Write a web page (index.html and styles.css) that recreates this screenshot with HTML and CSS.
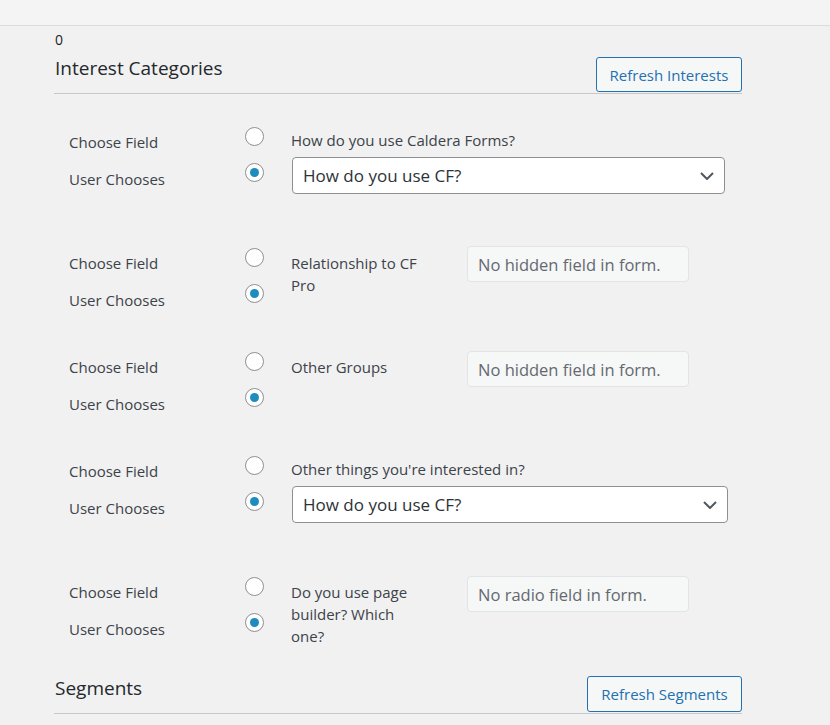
FILE: index.html
```html
<!DOCTYPE html>
<html>
<head>
<meta charset="utf-8">
<link rel="stylesheet" href="styles.css">
</head>
<body>
<div class="topbar"></div>
<main class="content">
  <div class="count">0</div>
  <div class="section-head">
    <h2 class="section-title">Interest Categories</h2>
    <button class="btn btn-interests" type="button">Refresh Interests</button>
  </div>

  <div class="rows">
    <div class="row row-select">
      <div class="modes">
        <div class="mode mode-first">Choose Field</div>
        <div class="mode">User Chooses</div>
      </div>
      <div class="radios">
        <span class="radio"></span>
        <span class="radio radio-on"></span>
      </div>
      <div class="field-stack">
        <div class="field-label">How do you use Caldera Forms?</div>
        <div class="select select-a"><span>How do you use CF?</span><svg class="chev" viewBox="0 0 14 8" width="14" height="8"><path d="M1 1l6 6 6-6" fill="none" stroke="#50575e" stroke-width="2"/></svg></div>
      </div>
    </div>

    <div class="row row-plain">
      <div class="modes">
        <div class="mode mode-first">Choose Field</div>
        <div class="mode">User Chooses</div>
      </div>
      <div class="radios">
        <span class="radio"></span>
        <span class="radio radio-on"></span>
      </div>
      <div class="field-inline">
        <div class="field-label-col">Relationship to CF Pro</div>
        <div class="placeholder placeholder-top">No hidden field in form.</div>
      </div>
    </div>

    <div class="row row-plain">
      <div class="modes">
        <div class="mode mode-first">Choose Field</div>
        <div class="mode">User Chooses</div>
      </div>
      <div class="radios">
        <span class="radio"></span>
        <span class="radio radio-on"></span>
      </div>
      <div class="field-inline">
        <div class="field-label-col">Other Groups</div>
        <div class="placeholder">No hidden field in form.</div>
      </div>
    </div>

    <div class="row row-select">
      <div class="modes">
        <div class="mode mode-first">Choose Field</div>
        <div class="mode">User Chooses</div>
      </div>
      <div class="radios">
        <span class="radio"></span>
        <span class="radio radio-on"></span>
      </div>
      <div class="field-stack">
        <div class="field-label">Other things you're interested in?</div>
        <div class="select select-b"><span>How do you use CF?</span><svg class="chev" viewBox="0 0 14 8" width="14" height="8"><path d="M1 1l6 6 6-6" fill="none" stroke="#50575e" stroke-width="2"/></svg></div>
      </div>
    </div>

    <div class="row row-last">
      <div class="modes">
        <div class="mode mode-first">Choose Field</div>
        <div class="mode">User Chooses</div>
      </div>
      <div class="radios">
        <span class="radio"></span>
        <span class="radio radio-on"></span>
      </div>
      <div class="field-inline">
        <div class="field-label-col">Do you use page builder? Which one?</div>
        <div class="placeholder">No radio field in form.</div>
      </div>
    </div>
  </div>

  <div class="section-head section-head-seg">
    <h2 class="section-title">Segments</h2>
    <button class="btn btn-segments" type="button">Refresh Segments</button>
  </div>
</main>
</body>
</html>
```

FILE: styles.css
```css
* { box-sizing: border-box; }

html, body {
  margin: 0;
  padding: 0;
  background: #f1f1f1;
  font-family: "Open Sans", "Noto Sans", "Liberation Sans", sans-serif;
  color: #3c434a;
  overflow: hidden;
}

.topbar {
  height: 26px;
  background: #f4f4f4;
  border-bottom: 1px solid #dcdcde;
}

.content {
  width: 688px;
  margin-left: 54px;
}

.count {
  margin-top: 5px;
  font-size: 14px;
  line-height: 18px;
  padding-left: 1px;
  color: #1d2327;
}

.section-head {
  display: flex;
  justify-content: space-between;
  align-items: flex-start;
  margin-top: 7px;
  height: 38px;
  border-bottom: 1px solid #c8c8c8;
}

.section-title {
  margin: 0;
  padding-left: 1px;
  font-size: 19px;
  line-height: 24px;
  font-weight: 400;
  color: #23282d;
}

.btn {
  margin-top: 1px;
  height: 35px;
  padding: 0;
  background: #f6f7f7;
  border: 1px solid #2271b1;
  border-radius: 3px;
  color: #2271b1;
  font-family: inherit;
  font-size: 15px;
}

.btn-interests { width: 146px; }
.btn-segments { width: 155px; margin-top: 0; height: 36px; }

.section-head-seg { margin-top: 0; }

.rows { margin-top: 31px; }

.row {
  display: flex;
  align-items: flex-start;
}
.row-select { height: 121px; }
.row-plain { height: 104px; }
.row-last { height: 101px; }

.modes {
  width: 190px;
  padding-left: 15px;
  font-size: 15px;
  line-height: 20px;
}
.mode { margin-top: 17px; }
.mode-first { margin-top: 7px; }

.radios {
  width: 20px;
  display: flex;
  flex-direction: column;
  align-items: center;
  padding-top: 2px;
}

.radio {
  display: flex;
  align-items: center;
  justify-content: center;
  width: 19px;
  height: 19px;
  border: 1px solid #8c8f94;
  border-radius: 50%;
  background: #fff;
}
.radio + .radio { margin-top: 17px; }
.radio-on::after {
  content: "";
  width: 9px;
  height: 9px;
  border-radius: 50%;
  background: #1e8cbe;
}

.field-stack {
  margin-left: 27px;
  padding-top: 5px;
}
.field-label {
  font-size: 15px;
  line-height: 20px;
}

.select {
  display: flex;
  align-items: center;
  justify-content: space-between;
  margin-top: 7px;
  margin-left: 1px;
  height: 37px;
  padding: 0 10px 0 10px;
  background: #fff;
  border: 1px solid #8c8f94;
  border-radius: 4px;
  font-size: 17px;
  color: #2c3338;
}
.select-a { width: 433px; }
.select-b { width: 436px; }
.chev { display: block; margin-top: 1px; }

.field-inline {
  display: flex;
  align-items: flex-start;
  margin-left: 27px;
}
.field-label-col {
  width: 137px;
  margin-right: 39px;
  padding-top: 6px;
  font-size: 15px;
  line-height: 22px;
}

.placeholder {
  margin-top: 1px;
  width: 222px;
  height: 36px;
  padding: 0 10px;
  display: flex;
  align-items: center;
  background: #f6f7f7;
  border: 1px solid #e2e4e7;
  border-radius: 4px;
  font-size: 16.5px;
  color: #646970;
}
.placeholder-top { margin-top: 0; }
```
